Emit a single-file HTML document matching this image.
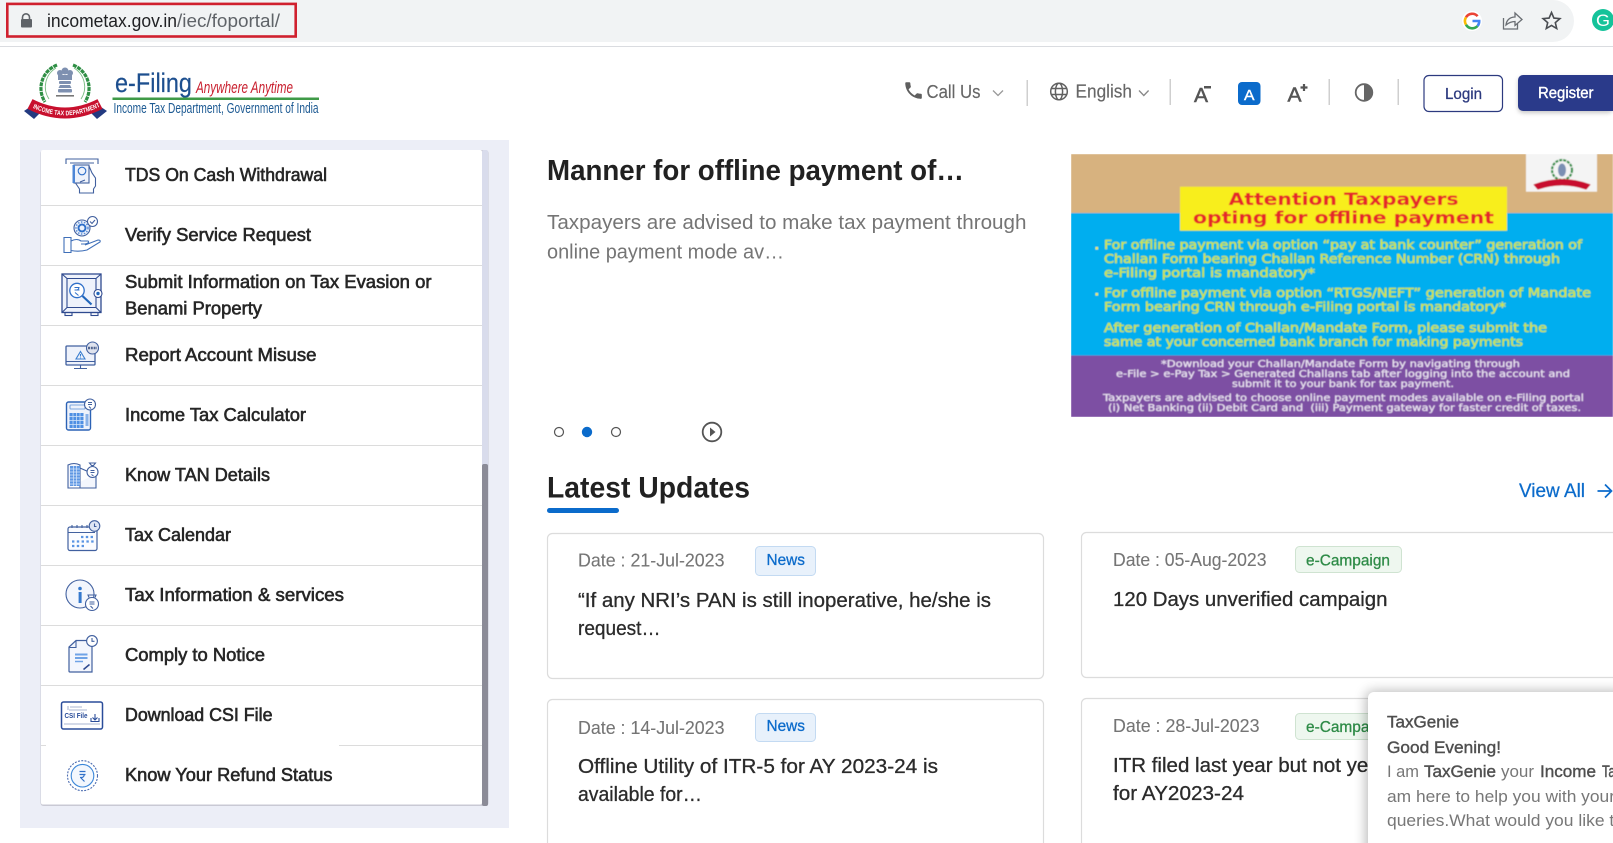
<!DOCTYPE html>
<html lang="en"><head><meta charset="utf-8"><title>e-Filing</title>
<style>
html,body{margin:0;padding:0;background:#fff;width:1613px;height:843px;overflow:hidden}
svg{display:block;position:absolute;left:0;top:0;filter:blur(.25px)}
text{font-family:"Liberation Sans",Arial,sans-serif;white-space:pre}
.m{font-size:18px;fill:#262626;stroke:#262626;stroke-width:.6}
.d{font-size:18px;fill:#757575;stroke:#757575;stroke-width:.1}
.t{font-size:20px;fill:#2b2b2b;stroke:#2b2b2b;stroke-width:.3}
.ic{fill:none;stroke:#41609f;stroke-width:1.1}
.bl{fill:#6fa3e6;stroke:none}
.lb{fill:#eef2fb;stroke:#41609f;stroke-width:1.1}
.b0{font-family:"DejaVu Sans",sans-serif;font-size:17px;font-weight:bold;fill:#e5272b}
.b1{font-family:"DejaVu Sans",sans-serif;font-size:12px;fill:#cfe64a;stroke:#cfe64a;stroke-width:.4}
.b2{font-family:"DejaVu Sans",sans-serif;font-size:9.5px;fill:#e9e2f0;stroke:#e9e2f0;stroke-width:.25}
.p{font-size:17px;fill:#777}
.pb{font-size:17px;fill:#4f4f4f;stroke:#4f4f4f;stroke-width:.4}
</style></head><body>
<svg width="1613" height="843" viewBox="0 0 1613 843" xmlns="http://www.w3.org/2000/svg">
<defs>
<filter id="sh" x="-20%" y="-20%" width="140%" height="140%"><feGaussianBlur stdDeviation="6"/></filter>
<filter id="sh2" x="-20%" y="-30%" width="140%" height="170%"><feGaussianBlur stdDeviation="2"/></filter>
<filter id="bn" x="0" y="0" width="100%" height="100%"><feGaussianBlur stdDeviation=".45"/></filter>
<path id="rib" d="M30 104 Q65 122 100 104"/>
</defs>

<!-- browser bar -->
<path d="M0 0H1553A21 21 0 0 1 1553 42H0Z" fill="#f1f3f4"/>
<rect x="0" y="46" width="1613" height="1" fill="#dadce0"/>
<rect x="7.300" y="3.900" width="288.400" height="32.600" fill="#f1f3f4" stroke="#d0202e" stroke-width="2.600"/>
<path d="M22.500 19.500v-2.200a3.500 3.500 0 0 1 7 0v2.200" fill="none" stroke="#5f6368" stroke-width="1.600"/>
<rect x="21" y="19" width="11" height="8.500" rx="1" fill="#5f6368"/>
<text x="47" y="27" font-size="18" fill="#202124" textLength="130" lengthAdjust="spacingAndGlyphs">incometax.gov.in</text>
<text x="177" y="27" font-size="18" fill="#5f6368" textLength="103" lengthAdjust="spacingAndGlyphs">/iec/foportal/</text>

<circle cx="1472" cy="21" r="10" fill="#fff"/>
<g fill="none" stroke-width="2.600">
<path d="M1477.600 16.200A7.200 7.200 0 0 0 1466 17.300" stroke="#ea4335"/>
<path d="M1466 17.300A7.200 7.200 0 0 0 1466 24.700" stroke="#fbbc05"/>
<path d="M1466 24.700A7.200 7.200 0 0 0 1477.500 26" stroke="#34a853"/>
<path d="M1477.500 26A7.200 7.200 0 0 0 1479.200 21H1472.500" stroke="#4285f4"/>
</g>
<path d="M1503.500 18v11h14v-6M1506 25c.5-5 4-8 9-8v-4l7 6.500-7 6v-4c-3 0-6 1-9 3.500z" fill="none" stroke="#6a6e73" stroke-width="1.300"/>
<path d="M1551.500 12.500l2.400 5.600 6 .5-4.600 4 1.400 5.900-5.200-3.100-5.200 3.100 1.400-5.900-4.600-4 6-.5z" fill="none" stroke="#4a4d52" stroke-width="1.600"/>
<circle cx="1603" cy="20" r="11" fill="#15c39a"/>
<text x="1596" y="26" font-size="17" fill="#fff" textLength="14" lengthAdjust="spacingAndGlyphs">G</text>

<!-- logo -->
<path d="M57 65A25 25 0 0 0 45 102M73 65A25 25 0 0 1 85 102" fill="none" stroke="#2f8f45" stroke-width="3.200" stroke-dasharray="4 .8"/>
<path d="M56 68A22 22 0 0 0 49 99M74 68A22 22 0 0 1 81 99" fill="none" stroke="#7bbd85" stroke-width=".9"/>
<g fill="#7e90b0">
<circle cx="65" cy="71" r="3.500"/><circle cx="60" cy="73" r="3"/><circle cx="70" cy="73" r="3"/>
<rect x="58" y="75" width="14" height="5"/>
<rect x="59" y="81" width="12" height="3" rx="1"/>
<path d="M60 85h10l1.500 3h-13z"/><rect x="58" y="89" width="14" height="3.500" rx="1"/>
</g>
<rect x="56" y="95" width="18" height="1.600" fill="#777"/>
<path d="M24 111l9-6 7 8-6 6z" fill="#233a80"/>
<path d="M107 111l-9-6-7 8 6 6z" fill="#233a80"/>
<use href="#rib" fill="none" stroke="#c8102e" stroke-width="11"/>
<text font-size="6.600" font-weight="bold" fill="#fff" dy="2.300"><textPath href="#rib" startOffset="4" textLength="68" lengthAdjust="spacingAndGlyphs">INCOME TAX DEPARTMENT</textPath></text>
<text x="115" y="92" font-size="27" fill="#1d4f8f" stroke="#1d4f8f" stroke-width=".2" textLength="77" lengthAdjust="spacingAndGlyphs">e-Filing</text>
<text x="196" y="93" font-size="16.500" font-style="italic" fill="#c9202f" textLength="97" lengthAdjust="spacingAndGlyphs">Anywhere Anytime</text>
<rect x="112.500" y="97.500" width="206.500" height="2.500" fill="#3f9a47"/>
<text x="113.500" y="113" font-size="14.500" fill="#1d5a93" textLength="205" lengthAdjust="spacingAndGlyphs">Income Tax Department, Government of India</text>

<!-- header nav -->
<path transform="translate(902.500,79.500) scale(.92)" d="M6.620 10.790c1.440 2.830 3.760 5.140 6.590 6.590l2.200-2.200c.27-.27.67-.36 1.020-.24 1.120.37 2.330.57 3.570.57.55 0 1 .45 1 1V20c0 .55-.45 1-1 1-9.390 0-17-7.610-17-17 0-.55.45-1 1-1h3.500c.55 0 1 .45 1 1 0 1.250.2 2.450.57 3.570.11.35.03.74-.25 1.020l-2.200 2.200z" fill="#5f5f5f"/>
<text x="926.500" y="98" font-size="18.500" fill="#666" stroke="#666" stroke-width=".15" textLength="54" lengthAdjust="spacingAndGlyphs">Call Us</text>
<path d="M993 90.500l5 5 5-5" fill="none" stroke="#999" stroke-width="1.300"/>
<rect x="1026.500" y="80" width="1.500" height="26" fill="#cfcfcf"/>
<g fill="none" stroke="#606060" stroke-width="1.500">
<circle cx="1059" cy="91.500" r="8.300"/><ellipse cx="1059" cy="91.500" rx="3.600" ry="8.300"/>
<path d="M1051.500 88.500h15M1051.500 94.500h15"/>
</g>
<text x="1075.500" y="97.500" font-size="18.500" fill="#666" stroke="#666" stroke-width=".15" textLength="56.500" lengthAdjust="spacingAndGlyphs">English</text>
<path d="M1139 90.500l4.800 5 4.800-5" fill="none" stroke="#888" stroke-width="1.300"/>
<rect x="1169.500" y="79" width="1.500" height="26" fill="#cfcfcf"/>
<text x="1194" y="102" font-size="20" fill="#555" stroke="#555" stroke-width=".5" textLength="14" lengthAdjust="spacingAndGlyphs">A</text>
<rect x="1204" y="86" width="7" height="2.500" fill="#555"/>
<rect x="1238" y="82" width="22.500" height="23" rx="4" fill="#0b6bcb"/>
<text x="1244" y="100" font-size="15" fill="#fff" stroke="#fff" stroke-width=".4" textLength="10.500" lengthAdjust="spacingAndGlyphs">A</text>
<text x="1287.500" y="101.500" font-size="20" fill="#555" stroke="#555" stroke-width=".5" textLength="14" lengthAdjust="spacingAndGlyphs">A</text>
<path d="M1300.500 87.500h7M1304 84v7" stroke="#555" stroke-width="2.200"/>
<rect x="1328.500" y="79" width="1.500" height="26" fill="#cfcfcf"/>
<circle cx="1364" cy="92.500" r="8.300" fill="#fff" stroke="#666" stroke-width="1.800"/>
<path d="M1364 84.200a8.300 8.300 0 0 1 0 16.600z" fill="#666"/>
<rect x="1397.500" y="79" width="1.500" height="26" fill="#cfcfcf"/>
<rect x="1424" y="75.500" width="78.500" height="36" rx="5" fill="#fff" stroke="#2c3a7f" stroke-width="1.200"/>
<text x="1445" y="99" font-size="16" fill="#2c3a7f" stroke="#2c3a7f" stroke-width=".3" textLength="37" lengthAdjust="spacingAndGlyphs">Login</text>
<rect x="1518" y="77" width="95" height="36" rx="5" fill="#999" opacity=".55" filter="url(#sh2)"/>
<rect x="1518" y="75" width="100" height="36" rx="5" fill="#2a3a8a"/>
<text x="1538" y="98" font-size="15.500" fill="#fff" stroke="#fff" stroke-width=".4" textLength="55.500" lengthAdjust="spacingAndGlyphs">Register</text>

<!-- sidebar -->
<rect x="20" y="140" width="489" height="688" fill="#eceef7"/>
<rect x="40.500" y="150" width="448" height="656" rx="3" fill="#c9c9d4"/>
<rect x="41" y="150" width="441" height="654.500" rx="2" fill="#fff"/>
<rect x="482" y="150" width="6" height="655" rx="2" fill="#d9dcec"/>
<rect x="482" y="464" width="6" height="342" rx="2" fill="#8b8b97"/>
<g fill="#dcdcdc">
<rect x="41" y="205" width="441" height="1"/><rect x="41" y="265" width="441" height="1"/>
<rect x="41" y="325" width="441" height="1"/><rect x="41" y="385" width="441" height="1"/>
<rect x="41" y="445" width="441" height="1"/><rect x="41" y="505" width="441" height="1"/>
<rect x="41" y="565" width="441" height="1"/><rect x="41" y="625" width="441" height="1"/>
<rect x="41" y="685" width="441" height="1"/><rect x="41" y="745" width="5" height="1"/>
<rect x="339" y="745" width="143" height="1"/>
</g>
<text class="m" x="125" y="181" textLength="202" lengthAdjust="spacingAndGlyphs">TDS On Cash Withdrawal</text>
<text class="m" x="125" y="241" textLength="186" lengthAdjust="spacingAndGlyphs">Verify Service Request</text>
<text class="m" x="125" y="288" textLength="306.500" lengthAdjust="spacingAndGlyphs">Submit Information on Tax Evasion or</text>
<text class="m" x="125" y="314.500" textLength="137" lengthAdjust="spacingAndGlyphs">Benami Property</text>
<text class="m" x="125" y="361" textLength="191.500" lengthAdjust="spacingAndGlyphs">Report Account Misuse</text>
<text class="m" x="125" y="421" textLength="181" lengthAdjust="spacingAndGlyphs">Income Tax Calculator</text>
<text class="m" x="125" y="481" textLength="145" lengthAdjust="spacingAndGlyphs">Know TAN Details</text>
<text class="m" x="125" y="541" textLength="106" lengthAdjust="spacingAndGlyphs">Tax Calendar</text>
<text class="m" x="125" y="601" textLength="219" lengthAdjust="spacingAndGlyphs">Tax Information &amp; services</text>
<text class="m" x="125" y="661" textLength="140" lengthAdjust="spacingAndGlyphs">Comply to Notice</text>
<text class="m" x="125" y="721" textLength="147.500" lengthAdjust="spacingAndGlyphs">Download CSI File</text>
<text class="m" x="125" y="781" textLength="207.500" lengthAdjust="spacingAndGlyphs">Know Your Refund Status</text>

<!-- row icons -->
<g class="ic">
<path d="M66 164v-5h32v5M70 163h24"/><rect class="lb" x="74" y="165" width="15" height="18"/>
<rect class="bl" x="72.500" y="165" width="2.500" height="18" style="fill:#4d86d6"/><circle cx="82" cy="171" r="3.800" stroke="#2f6fc9"/>
<path d="M89 166l3 7 3.500 5v8l-2 3v4h-14v-4l-4-6M80 182l5-2"/>
<path d="M64 237.500h7v15h-7zM71 241q6-3 10 0h7q2 2-3 3l-4 0M85 245l13-5q3 0 2 2l-13 8q-8 2-16 .5" stroke="#3f6fb8"/>
<circle cx="82" cy="228" r="8" fill="#eef2fb"/><circle cx="82" cy="228" r="3.500" stroke="#2f6fc9" stroke-width="2"/>
<circle cx="82" cy="228" r="6" stroke="#5a8fd8" stroke-dasharray="1.500 1.500" stroke-width="1.500"/>
<circle cx="92.500" cy="221.500" r="5" fill="#fff"/><path d="M90 221.500l2 2 3-3.500"/>
<rect class="lb" x="62" y="274" width="39" height="38.500" style="stroke-width:1.300;stroke:#2f4a8f"/>
<path d="M62 274l5 4.500h29l5-4.500M62 312.500l5-5h29l5 5M67 278.500v29M96 278.500v29" stroke="#2f4a8f"/>
<rect x="65" y="312.500" width="7" height="3" stroke="#2f4a8f"/><rect x="91" y="312.500" width="7" height="3" stroke="#2f4a8f"/>
<circle cx="77" cy="290.500" r="7.200" fill="#fff" stroke="#2f6fc9" stroke-width="1.300"/>
<path d="M74.500 287.500h5M74.500 290h5M75 292.500l3.500 3M75 290h1.500q2 0 2.500-2.500" stroke="#2f6fc9" stroke-width="1"/>
<path d="M82.500 296l9 8.500" stroke="#2166bb" stroke-width="2.200"/>
<circle cx="98" cy="293.500" r="4" fill="#fff" stroke="#2f4a8f"/><circle cx="98" cy="293.500" r="1.700" fill="#2166bb" stroke="none"/>
<rect class="lb" x="66" y="346" width="29" height="19" rx="1" style="stroke-width:1.300"/>
<path d="M66 361.500h29M80.500 365v3M74 368.500h13"/>
<path d="M80.500 351.500l4.500 7.500h-9zM80.500 354v2.500M80.500 357.500v.8" stroke="#3b7fd0"/>
<circle cx="92.500" cy="348" r="6" fill="#dfe3ee"/>
<path d="M88 348h9" stroke-dasharray="2 .8" stroke-width="2.400" stroke="#51658f"/>
<rect class="lb" x="66.500" y="402" width="24" height="28" rx="2" style="stroke-width:1.400;stroke:#2c62b5"/>
<rect x="70" y="405" width="15" height="4" rx="1" stroke="#7fa8df"/>
<rect x="69.500" y="413" width="14" height="15" fill="#4f8fe3" stroke="none"/>
<path d="M69.500 416.500h14M69.500 420.500h14M69.500 424.500h14M73 413v15M76.500 413v15M80 413v15" stroke="#d8e7fa" stroke-width=".7"/>
<rect x="85.500" y="414" width="3" height="12" fill="#8ab2e8" stroke="none"/>
<circle cx="90" cy="404.500" r="5.500" fill="#fff"/><path d="M88 402.500h4M88 404.500h4M89 406.500l2 2"/>
<path d="M68 465q6-3 12 0v23h-12zM80 468l9 4M68 488h28v-14" fill="#f3f6fd"/>
<rect x="70" y="466" width="10" height="20" fill="#5f97e3" stroke="none"/>
<path d="M70 469h10M70 472h10M70 475h10M70 478h10M70 481h10M70 484h10M73.500 466v20M76.500 466v20" stroke="#d8e7fa" stroke-width=".7"/>
<path d="M89.500 463l2 2.500h2l2-2.500z"/><circle cx="92.500" cy="472" r="5.500" fill="#fff"/>
<path d="M90.500 470.500h4M90.500 472.500h4M91.500 474.500l2 1.500" stroke-width="1"/>
<rect x="68" y="527" width="29" height="23.500" rx="2" fill="#fbfcff" stroke-width="1.200"/>
<path d="M68 532.500h27M72 525v3M77 525v3M82 525v3M87 525v3"/>
<g stroke="#5a94e2" stroke-width="2.200" stroke-dasharray="2.400 2.400"><path d="M81 537h14M72 541.500h23M72 546h14"/></g>
<circle cx="94.500" cy="526" r="5.300" fill="#dfe6f4"/><path d="M94.500 523.500v3h2"/>
<circle cx="80" cy="594" r="14" fill="#f3f6fd"/>
<rect class="bl" x="78.600" y="592" width="3" height="11" style="fill:#3578cd"/><circle class="bl" cx="80" cy="588.500" r="1.800" style="fill:#3578cd"/>
<path d="M89 597.500l-1-2.500h8l-1 2.500"/><circle cx="92" cy="604" r="6.500" fill="#fff"/>
<path d="M89.500 602h5M89.500 604h5M90.500 606l2.500 2.500"/>
<path d="M76 640.500h16v31.500h-22a1 1 0 0 1-1-1v-24z" fill="#f3f6fd" stroke-width="1.200"/><path d="M69 647.500h7v-7"/>
<circle cx="92" cy="641" r="5.400" fill="#fff"/><path d="M92 638v3.300h2.500"/>
<path d="M75 654.500h12.500M75 658h12.500" stroke="#6fa3e6" stroke-width="2"/><path d="M75 661.500h8" stroke="#6fa3e6" stroke-width="1.500"/>
<path d="M83.500 669.500l6-5" stroke="#2f4a8f" stroke-width="1.500"/>
<rect x="61.500" y="702" width="41" height="27" rx="2" fill="#fff" stroke="#2a4d9a" stroke-width="1.500"/>
<path d="M70 707h12M69 710h18M64 724h36" stroke="#a9b5d2"/><path d="M68 706v4" stroke="#a9b5d2"/>
<path d="M95 714v6M92.500 717.500l2.500 2.500 2.500-2.500M91 718v3.500h8v-3.500" stroke="#2a4d9a" stroke-width="1.100"/>
<circle cx="82.500" cy="775.700" r="15" stroke-dasharray="2 1.300" stroke="#4a6bb0"/>
<circle cx="82.500" cy="775.700" r="11.300" fill="#f3f7fd" stroke="#3b86d8" stroke-width="1.100"/>
<path d="M79.500 771.500h6M79.500 774.500h6M80 777.500h1.500q2.500 0 2.800-3M81 778l3.500 3.500" stroke="#2f6fc9" stroke-width="1.200"/>
</g>
<text x="64.500" y="718" font-size="7.500" font-weight="bold" fill="#2a4d9a" textLength="23" lengthAdjust="spacingAndGlyphs">CSI File</text>

<!-- carousel text -->
<text x="547" y="180" font-size="29" font-weight="bold" fill="#212121" textLength="417" lengthAdjust="spacingAndGlyphs">Manner for offline payment of…</text>
<text x="547" y="229" font-size="20" fill="#757575" textLength="479.500" lengthAdjust="spacingAndGlyphs">Taxpayers are advised to make tax payment through</text>
<text x="547" y="258.500" font-size="20" fill="#757575" textLength="237" lengthAdjust="spacingAndGlyphs">online payment mode av…</text>

<!-- banner -->
<g filter="url(#bn)">
<rect x="1071" y="154" width="542" height="59" fill="#d7b27f"/>
<rect x="1071" y="213" width="542" height="142.500" fill="#00aeef"/>
<rect x="1071" y="355.500" width="542" height="61.500" fill="#7d50a3"/>
<rect x="1526" y="154" width="71" height="37.700" fill="#f4f4f4"/>
<circle cx="1562" cy="170" r="10" fill="none" stroke="#2f8f45" stroke-width="2.200" stroke-dasharray="3 1"/>
<ellipse cx="1562" cy="170" rx="4" ry="6.500" fill="#7a8fb3"/>
<path d="M1535 185q27-10 54 0l-3 3.500q-24-8-48 0z" fill="#c8102e" stroke="#c8102e" stroke-width="2"/>
<rect x="1180" y="186.700" width="327" height="44" fill="#f8ee1c"/>
<text class="b0" x="1228.600" y="205" textLength="230" lengthAdjust="spacingAndGlyphs">Attention Taxpayers</text>
<text class="b0" x="1193" y="223.500" textLength="301" lengthAdjust="spacingAndGlyphs">opting for offline payment</text>
<rect x="1095.500" y="247" width="2.500" height="2.500" fill="#e6ee50"/><rect x="1095.500" y="293" width="2.500" height="2.500" fill="#e6ee50"/>
<text class="b1" x="1104" y="249" textLength="478" lengthAdjust="spacingAndGlyphs">For offline payment via option “pay at bank counter” generation of</text>
<text class="b1" x="1104" y="263" textLength="456" lengthAdjust="spacingAndGlyphs">Challan Form bearing Challan Reference Number (CRN) through</text>
<text class="b1" x="1104" y="277" textLength="211" lengthAdjust="spacingAndGlyphs">e-Filing portal is mandatory*</text>
<text class="b1" x="1104" y="297" textLength="487" lengthAdjust="spacingAndGlyphs">For offline payment via option “RTGS/NEFT” generation of Mandate</text>
<text class="b1" x="1104" y="311" textLength="402" lengthAdjust="spacingAndGlyphs">Form bearing CRN through e-Filing portal is mandatory*</text>
<text class="b1" x="1104" y="332" textLength="443" lengthAdjust="spacingAndGlyphs">After generation of Challan/Mandate Form, please submit the</text>
<text class="b1" x="1104" y="346" textLength="419" lengthAdjust="spacingAndGlyphs">same at your concerned bank branch for making payments</text>
<text class="b2" x="1161" y="367" textLength="359" lengthAdjust="spacingAndGlyphs">*Download your Challan/Mandate Form by navigating through</text>
<text class="b2" x="1116" y="377" textLength="454" lengthAdjust="spacingAndGlyphs">e-File &gt; e-Pay Tax &gt; Generated Challans tab after logging into the account and</text>
<text class="b2" x="1232" y="387" textLength="222" lengthAdjust="spacingAndGlyphs">submit it to your bank for tax payment.</text>
<text class="b2" x="1103" y="401" textLength="481" lengthAdjust="spacingAndGlyphs">Taxpayers are advised to choose online payment modes available on e-Filing portal</text>
<text class="b2" x="1108" y="411" textLength="473" lengthAdjust="spacingAndGlyphs">(i) Net Banking (ii) Debit Card and  (iii) Payment gateway for faster credit of taxes.</text>
</g>

<!-- carousel controls -->
<circle cx="559" cy="432" r="4.500" fill="#fff" stroke="#555" stroke-width="1.200"/>
<circle cx="587" cy="432" r="5.200" fill="#0b6bcb"/>
<circle cx="616" cy="432" r="4.500" fill="#fff" stroke="#555" stroke-width="1.200"/>
<circle cx="712" cy="432" r="9.300" fill="#fff" stroke="#555" stroke-width="1.800"/>
<path d="M710 427.500l5.500 4.500-5.500 4.500z" fill="#555"/>

<!-- latest updates -->
<text x="547" y="497.500" font-size="30" font-weight="bold" fill="#212121" textLength="203" lengthAdjust="spacingAndGlyphs">Latest Updates</text>
<rect x="547" y="508" width="72" height="5" rx="2.500" fill="#0b6bcb"/>
<text x="1519" y="497" font-size="19" fill="#0b6bcb" stroke="#0b6bcb" stroke-width=".25" textLength="66" lengthAdjust="spacingAndGlyphs">View All</text>
<path d="M1597.500 491h14M1605 484.500l6.500 6.500-6.500 6.500" fill="none" stroke="#0b6bcb" stroke-width="1.700"/>

<!-- cards -->
<g fill="#fff" stroke="#dcdcdc" stroke-width="1.200">
<rect x="547.500" y="533.500" width="496" height="145" rx="5"/>
<rect x="547.500" y="699.500" width="496" height="160" rx="5"/>
<rect x="1081.500" y="532.500" width="560" height="145" rx="5"/>
<rect x="1081.500" y="698.500" width="560" height="160" rx="5"/>
</g>
<text class="d" x="578" y="566.500" textLength="146.500" lengthAdjust="spacingAndGlyphs">Date : 21-Jul-2023</text>
<rect x="755.500" y="546.500" width="60" height="29" rx="4" fill="#e8f1fb" stroke="#c3daf2"/>
<text x="766.500" y="565" font-size="16" fill="#0b6bcb" stroke="#0b6bcb" stroke-width=".3" textLength="38.500" lengthAdjust="spacingAndGlyphs">News</text>
<text class="t" x="578" y="607" textLength="413" lengthAdjust="spacingAndGlyphs">“If any NRI’s PAN is still inoperative, he/she is</text>
<text class="t" x="578" y="635" textLength="82.500" lengthAdjust="spacingAndGlyphs">request…</text>

<text class="d" x="578" y="734" textLength="146.500" lengthAdjust="spacingAndGlyphs">Date : 14-Jul-2023</text>
<rect x="755.500" y="713.500" width="60" height="28" rx="4" fill="#e8f1fb" stroke="#c3daf2"/>
<text x="766.500" y="731" font-size="16" fill="#0b6bcb" stroke="#0b6bcb" stroke-width=".3" textLength="38.500" lengthAdjust="spacingAndGlyphs">News</text>
<text class="t" x="578" y="773" textLength="360" lengthAdjust="spacingAndGlyphs">Offline Utility of ITR-5 for AY 2023-24 is</text>
<text class="t" x="578" y="801" textLength="124" lengthAdjust="spacingAndGlyphs">available for…</text>

<text class="d" x="1113" y="566" textLength="153.500" lengthAdjust="spacingAndGlyphs">Date : 05-Aug-2023</text>
<rect x="1295.500" y="546.500" width="106" height="26" rx="4" fill="#eef7ef" stroke="#cfe3d1"/>
<text x="1306" y="565.500" font-size="16" fill="#2e8b47" stroke="#2e8b47" stroke-width=".3" textLength="84" lengthAdjust="spacingAndGlyphs">e-Campaign</text>
<text class="t" x="1113" y="606" textLength="274.500" lengthAdjust="spacingAndGlyphs">120 Days unverified campaign</text>

<text class="d" x="1113" y="732" textLength="146.500" lengthAdjust="spacingAndGlyphs">Date : 28-Jul-2023</text>
<rect x="1295.500" y="713.500" width="106" height="26" rx="4" fill="#eef7ef" stroke="#cfe3d1"/>
<text x="1306" y="732" font-size="16" fill="#2e8b47" stroke="#2e8b47" stroke-width=".3" textLength="84" lengthAdjust="spacingAndGlyphs">e-Campaign</text>
<text class="t" x="1113" y="772" textLength="261" lengthAdjust="spacingAndGlyphs">ITR filed last year but not yet</text>
<text class="t" x="1113" y="800" textLength="131" lengthAdjust="spacingAndGlyphs">for AY2023-24</text>

<!-- chat popup -->
<rect x="1366" y="691" width="260" height="170" rx="6" fill="#000" opacity=".28" filter="url(#sh)"/>
<rect x="1368" y="692" width="260" height="170" rx="6" fill="#fff"/>
<text class="pb" x="1387" y="727.500" textLength="72" lengthAdjust="spacingAndGlyphs">TaxGenie</text>
<text class="pb" x="1387" y="753" textLength="114" lengthAdjust="spacingAndGlyphs">Good Evening!</text>
<text class="p" x="1387" y="777" textLength="32" lengthAdjust="spacingAndGlyphs">I am</text>
<text class="pb" x="1424" y="777" textLength="72" lengthAdjust="spacingAndGlyphs">TaxGenie</text>
<text class="p" x="1501" y="777" textLength="33" lengthAdjust="spacingAndGlyphs">your</text>
<text class="pb" x="1540" y="777" textLength="56" lengthAdjust="spacingAndGlyphs">Income</text>
<text class="pb" x="1602" y="777" textLength="20" lengthAdjust="spacingAndGlyphs">Tax</text>
<text class="p" x="1387" y="802" textLength="228" lengthAdjust="spacingAndGlyphs">am here to help you with your</text>
<text class="p" x="1387" y="826" textLength="237" lengthAdjust="spacingAndGlyphs">queries.What would you like to</text>
</svg>
</body></html>
